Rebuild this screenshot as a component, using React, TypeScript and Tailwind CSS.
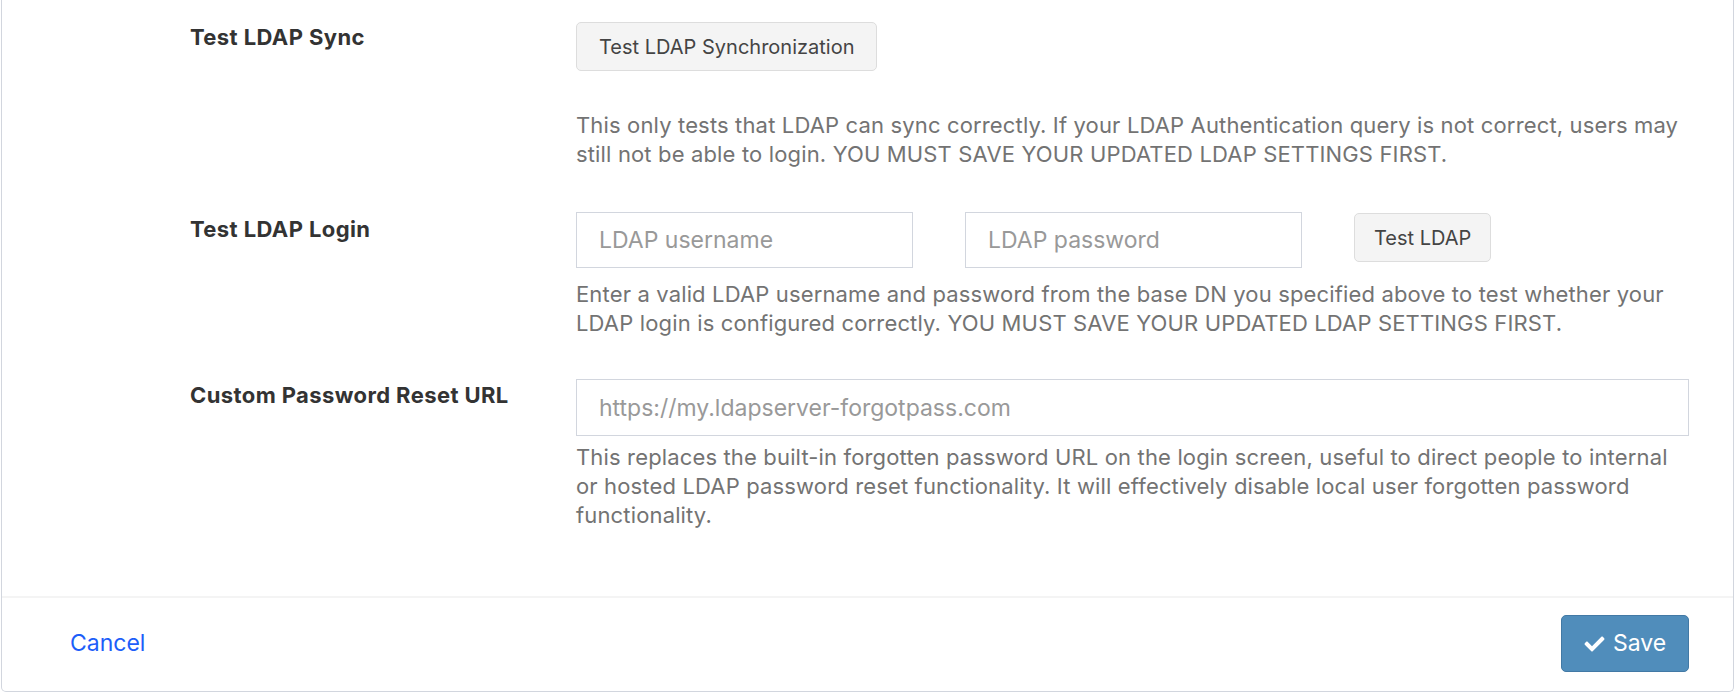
import { ButtonHTMLAttributes } from "react"

function DefaultButton({ className = "", ...props }: ButtonHTMLAttributes<HTMLButtonElement>) {
  return (
    <button
      type="button"
      className={
        "h-[49px] rounded-[5px] border border-[#dddddd] bg-[#f4f4f4] text-[20px] text-[#444444] " + className
      }
      {...props}
    />
  )
}

function HelpText({ children, className = "" }: { children: React.ReactNode; className?: string }) {
  return (
    <p className={"text-[22px] leading-[29px] tracking-[0.15px] text-[#737373] " + className}>{children}</p>
  )
}

function CheckIcon() {
  return (
    <svg viewBox="0 0 512 512" className="h-[20px] w-[21px]" fill="currentColor">
      <path d="M173.9 439.4l-166.4-166.4c-10-10-10-26.2 0-36.2l36.2-36.2c10-10 26.2-10 36.2 0L192 312.7 432.1 72.6c10-10 26.2-10 36.2 0l36.2 36.2c10 10 10 26.2 0 36.2l-294.4 294.4c-10 10-26.2 10-36.2 0z" />
    </svg>
  )
}

const labelClass =
  "w-[386px] shrink-0 text-[22px] font-bold leading-[30px] tracking-[0.4px] text-[#333333]"
const inputClass =
  "h-[56px] border border-[#d2d6de] px-[22px] text-[23px] text-[#555555] placeholder:text-[#999999] outline-none"

export default function App() {
  return (
    <div className="min-h-screen bg-white font-['Inter',sans-serif] antialiased">
      <div className="ml-px mr-[2px] rounded-b-[5px] border-x border-b border-[#d2d6de] bg-white">
        {/* LDAP test fields */}
        <div className="pl-[188px] pr-[44px] pt-[22px] pb-[66px]">
          {/* Test LDAP Sync */}
          <div className="flex">
            <label className={labelClass}>Test LDAP Sync</label>
            <div className="flex-1">
              <DefaultButton className="px-[22px]">Test LDAP Synchronization</DefaultButton>
              <HelpText className="mt-[40px]">
                This only tests that LDAP can sync correctly. If your LDAP Authentication query is not correct, users
                may still not be able to login. YOU MUST SAVE YOUR UPDATED LDAP SETTINGS FIRST.
              </HelpText>
            </div>
          </div>

          {/* Test LDAP Login */}
          <div className="mt-[43px] flex">
            <label className={labelClass + " pt-[2px]"}>Test LDAP Login</label>
            <div className="flex-1">
              <div className="flex items-start gap-[52px]">
                <input type="text" placeholder="LDAP username" className={inputClass + " w-[337px]"} />
                <input type="password" placeholder="LDAP password" className={inputClass + " w-[337px]"} />
                <DefaultButton className="mt-px px-[19px]">Test LDAP</DefaultButton>
              </div>
              <HelpText className="mt-[12px]">
                Enter a valid LDAP username and password from the base DN you specified above to test whether your
                LDAP login is configured correctly. YOU MUST SAVE YOUR UPDATED LDAP SETTINGS FIRST.
              </HelpText>
            </div>
          </div>

          {/* Custom Password Reset URL */}
          <div className="mt-[41px] flex">
            <label className={labelClass + " pt-px"}>Custom Password Reset URL</label>
            <div className="flex-1">
              <input
                type="text"
                placeholder="https://my.ldapserver-forgotpass.com"
                className={inputClass + " h-[57px] w-full"}
              />
              <HelpText className="mt-[7px]">
                This replaces the built-in forgotten password URL on the login screen, useful to direct people to
                internal or hosted LDAP password reset functionality. It will effectively disable local user forgotten
                password functionality.
              </HelpText>
            </div>
          </div>
        </div>

        {/* Footer */}
        <div className="flex items-center justify-between border-t-2 border-[#f4f4f4] pl-[68px] pr-[44px] pt-[17px] pb-[19px]">
          <a href="#" className="text-[23px] text-[#1d5ef9]">
            Cancel
          </a>
          <button
            type="button"
            className="flex h-[57px] w-[128px] items-center justify-center gap-[8px] rounded-[5px] border border-[#4279a5] bg-[#508dbb] text-[23px] text-white"
          >
            <CheckIcon />
            Save
          </button>
        </div>
      </div>
    </div>
  )
}
